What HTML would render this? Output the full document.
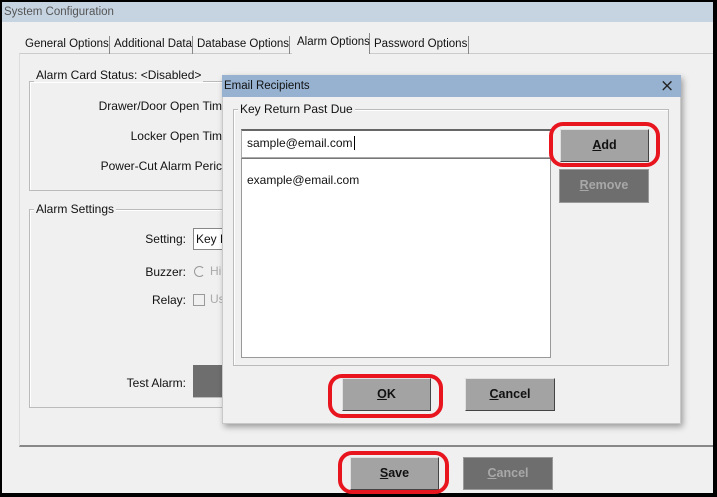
<!DOCTYPE html>
<html><head><style>
*{box-sizing:border-box;margin:0;padding:0}
body{width:717px;height:497px;background:#000;position:relative;overflow:hidden;font-family:"Liberation Sans",sans-serif;font-size:12px;color:#111}
.a{position:absolute;white-space:nowrap}
.win{left:2px;top:2px;width:711px;height:491px;background:#f0f0f0}
.tb{left:2px;top:2px;width:711px;height:20px;background:#c6d4e2;color:#555;padding:4px 2px;font-size:11.5px}
.tab{top:36px;height:18px;padding:2px 4px;border-right:1px solid #888;font-size:11.5px}
.gb{border:1px solid #bbb;box-shadow:inset 1px 1px 0 #fff}
.gl{background:#f0f0f0;padding:0 2px;font-size:12px}
.lbl{text-align:right;font-size:12px}
.btn{background:#a3a3a3;border:1px solid #e0e0e0;border-right-color:#444;border-bottom-color:#444;font-weight:bold;font-size:12.5px;text-align:center;line-height:30px}
.dis{background:#6e6e6e;color:#a8a8a8;border-color:#999}
.red{border:4px solid #e8141e;border-radius:14px}
u{text-decoration:underline}
</style></head><body>
<div class="a win"></div>
<div class="a tb">System Configuration</div>
<div class="a" style="left:19px;top:53px;width:694px;height:394px;border-top:1px solid #ccc;border-left:1px solid #ddd;border-bottom:2px solid #888"></div>
<div class="a tab" style="left:21px;width:89px">General Options</div>
<div class="a tab" style="left:110px;width:83px">Additional Data</div>
<div class="a tab" style="left:193px;width:97px">Database Options</div>
<div class="a" style="left:292px;top:33px;height:21px;width:78px;padding:3px 5px;background:#f0f0f0;border-right:1px solid #888;font-size:11.5px">Alarm Options</div>
<div class="a tab" style="left:370px;width:99px">Password Options</div>

<div class="a gb" style="left:29px;top:81px;width:200px;height:110px"></div>
<div class="a gl" style="left:34px;top:68px">Alarm Card Status: &lt;Disabled&gt;</div>
<div class="a lbl" style="left:40px;top:99px;width:182px">Drawer/Door Open Tim</div>
<div class="a lbl" style="left:40px;top:129px;width:182px">Locker Open Tim</div>
<div class="a lbl" style="left:40px;top:159px;width:182px">Power-Cut Alarm Peric</div>

<div class="a gb" style="left:29px;top:209px;width:200px;height:199px"></div>
<div class="a gl" style="left:34px;top:202px">Alarm Settings</div>
<div class="a lbl" style="left:100px;top:232px;width:86px">Setting:</div>
<div class="a" style="left:193px;top:228px;width:40px;height:22px;background:#fff;border:1px solid #888;padding:3px 2px;font-size:12px">Key R</div>
<div class="a lbl" style="left:100px;top:265px;width:86px">Buzzer:</div>
<div class="a" style="left:194px;top:266px;width:11px;height:11px;border:1px solid #999;border-radius:50%;border-right-color:transparent"></div>
<div class="a" style="left:210px;top:264px;color:#aaa">Hi</div>
<div class="a lbl" style="left:100px;top:293px;width:86px">Relay:</div>
<div class="a" style="left:193px;top:294px;width:12px;height:12px;border:1px solid #999"></div>
<div class="a" style="left:210px;top:292px;color:#aaa">Us</div>
<div class="a lbl" style="left:100px;top:376px;width:86px">Test Alarm:</div>
<div class="a" style="left:193px;top:365px;width:40px;height:33px;background:#6e6e6e;border-bottom:1px solid #bbb"></div>

<div class="a" style="left:222px;top:75px;width:459px;height:349px;background:#f0f0f0;box-shadow:2px 3px 6px rgba(0,0,0,.35);border:1px solid #c8c8c8"></div>
<div class="a" style="left:222px;top:75px;width:459px;height:22px;background:#97b2d0;padding:5px 2px;font-size:11.5px">Email Recipients</div>
<div class="a" style="left:660px;top:76px;font-size:17px;font-family:'DejaVu Sans',sans-serif;color:#222">×</div>
<div class="a gb" style="left:233px;top:109px;width:436px;height:257px"></div>
<div class="a gl" style="left:238px;top:102px">Key Return Past Due</div>
<div class="a" style="left:241px;top:129px;width:310px;height:29px;background:#fff;border:1px solid #aaa;border-top:2px solid #666;padding:5px 5px;font-size:12px">sample@email.com<span style="border-left:1px solid #000;margin-left:1px"></span></div>
<div class="a" style="left:241px;top:158px;width:310px;height:200px;background:#fff;border:1px solid #999;border-top:1px solid #777;padding:14px 5px;font-size:12px">example@email.com</div>
<div class="a btn" style="left:560px;top:129px;width:89px;height:33px"><u>A</u>dd</div>
<div class="a red" style="left:549px;top:122px;width:111px;height:45px"></div>
<div class="a btn dis" style="left:559px;top:169px;width:90px;height:34px"><u>R</u>emove</div>
<div class="a btn" style="left:342px;top:378px;width:89px;height:33px"><u>O</u>K</div>
<div class="a red" style="left:328px;top:374px;width:115px;height:44px"></div>
<div class="a btn" style="left:465px;top:378px;width:90px;height:33px"><u>C</u>ancel</div>

<div class="a btn" style="left:350px;top:457px;width:89px;height:33px"><u>S</u>ave</div>
<div class="a red" style="left:338px;top:451px;width:111px;height:43px"></div>
<div class="a btn dis" style="left:463px;top:457px;width:90px;height:33px"><u>C</u>ancel</div>
</body></html>
